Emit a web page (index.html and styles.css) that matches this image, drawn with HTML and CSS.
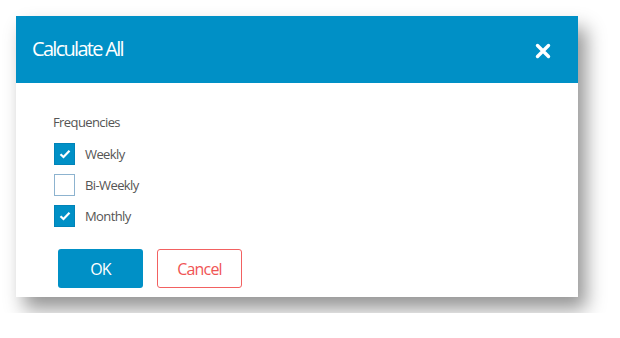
FILE: index.html
```html
<!DOCTYPE html>
<html lang="en">
<head>
    <meta charset="UTF-8">
    <title>Calculate All</title>
    <link rel="stylesheet" href="styles.css">
</head>
<body>

<div class="dialog">
    <div class="dialog-header">
        <h2>Calculate All</h2>
        <span class="close">
            <svg width="16" height="16" viewBox="0 0 16 16"><path d="M2.5 2.5 L13.5 13.5 M13.5 2.5 L2.5 13.5" stroke="#fff" stroke-width="3.4" stroke-linecap="round"/></svg>
        </span>
    </div>

    <div class="dialog-body">
        <div class="group-label">Frequencies</div>

        <label class="check">
            <span class="box checked">
                <svg width="12" height="10" viewBox="0 0 12 10"><path d="M1.5 5.2 L4.5 8 L10.5 1.8" stroke="#fff" stroke-width="2.2" fill="none"/></svg>
            </span>
            Weekly
        </label>
        <label class="check">
            <span class="box"></span>
            Bi-Weekly
        </label>
        <label class="check">
            <span class="box checked">
                <svg width="12" height="10" viewBox="0 0 12 10"><path d="M1.5 5.2 L4.5 8 L10.5 1.8" stroke="#fff" stroke-width="2.2" fill="none"/></svg>
            </span>
            Monthly
        </label>

        <div class="actions">
            <button class="btn btn-ok">OK</button>
            <button class="btn btn-cancel">Cancel</button>
        </div>
    </div>
</div>

</body>
</html>
```

FILE: styles.css
```css
body {
    margin: 0;
    padding: 16px;
    background-color: #fff;
    font-family: "Open Sans", Arial, sans-serif;
}
.dialog {
    width: 562px;
    height: 281px;
    background-color: #fff;
    box-shadow: 8px 12px 18px rgba(0, 0, 0, 0.42);
}
.dialog-header {
    height: 67px;
    background-color: #0090c6;
    display: flex;
    align-items: center;
    justify-content: space-between;
    padding: 0 27px 0 16px;
}
.dialog-header h2 {
    margin: 0 0 2px 0;
    font-weight: normal;
    font-size: 20px;
    color: #fff;
    letter-spacing: -1.7px;
}
.close {
    display: flex;
    margin-top: 2px;
}
.dialog-body {
    padding: 30px 37px 0 37px;
}
.group-label {
    font-size: 13px;
    color: #555;
    letter-spacing: -0.6px;
    margin-bottom: 7px;
}
.check {
    display: flex;
    align-items: center;
    height: 31px;
    font-size: 13px;
    color: #555;
    letter-spacing: -0.6px;
}
.box {
    width: 19px;
    height: 20px;
    border: 1px solid #8db3cf;
    margin-right: 10px;
    margin-left: 1px;
    display: flex;
    align-items: center;
    justify-content: center;
    box-sizing: content-box;
}
.box.checked {
    background-color: #0090c6;
    border-color: #0083b8;
}
.actions {
    display: flex;
    gap: 14px;
    margin-top: 18px;
    padding-left: 5px;
}
.btn {
    width: 85px;
    height: 39px;
    border-radius: 3px;
    font-family: "Open Sans", Arial, sans-serif;
    font-size: 16px;
    letter-spacing: -0.8px;
    cursor: pointer;
}
.btn-ok {
    background-color: #0090c6;
    border: none;
    color: #fff;
}
.btn-cancel {
    background-color: #fff;
    border: 1.5px solid #f26161;
    color: #f05454;
}
```
